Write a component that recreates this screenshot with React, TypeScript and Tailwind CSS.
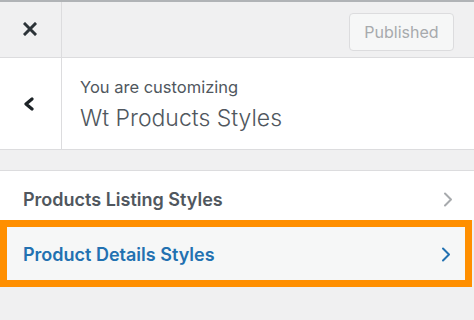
import React from 'react';

const Chevron = ({ className }: { className: string }) => (
  <svg viewBox="0 0 10 15" className={className} fill="none" stroke="currentColor" strokeWidth="2" strokeLinecap="round" strokeLinejoin="round">
    <path d="M2 1.5 L8 7.5 L2 13.5" />
  </svg>
);

export default function App() {
  return (
    <div className="w-[474px] h-[320px] overflow-hidden bg-[#f0f0f1] border-t-2 border-[#b0b3b6] font-['Inter','Liberation_Sans',sans-serif]">
      {/* top bar */}
      <div className="flex h-[56px] border-b border-[#dcdcde]">
        <div className="w-[62px] flex items-center justify-center border-r border-[#dcdcde] pb-[2px] pr-[1px]">
          <svg viewBox="0 0 14 14" className="w-[14px] h-[14px] text-[#2c3338]" fill="none" stroke="currentColor" strokeWidth="3" strokeLinecap="square">
            <path d="M2 2 L12 12 M12 2 L2 12" />
          </svg>
        </div>
        <div className="flex-1 flex justify-end items-start pt-[11px] pr-[20px]">
          <button className="h-[38px] w-[105px] rounded-[4px] border border-[#dcdcde] bg-[#f6f7f7] text-[16px] text-[#a7aaad]">
            Published
          </button>
        </div>
      </div>

      {/* customizing header */}
      <div className="flex h-[92px] bg-white border-b border-[#dcdcde]">
        <div className="w-[62px] flex items-center justify-center border-r border-[#dcdcde] pr-[3px]">
          <svg viewBox="0 0 12 14" className="w-[12px] h-[14px] text-[#1d2327]" fill="none" stroke="currentColor" strokeWidth="3.2" strokeLinecap="round" strokeLinejoin="round">
            <path d="M9 2 L3 7 L9 12" />
          </svg>
        </div>
        <div className="flex-1 flex flex-col pl-[18px] pt-[19px]">
          <span className="text-[16.5px] leading-[20px] text-[#50575e]">You are customizing</span>
          <span className="mt-[5px] text-[23px] leading-[32px] font-light text-[#50575e]">Wt Products Styles</span>
        </div>
      </div>

      <div className="h-[21px] border-b border-[#dcdcde]" />

      <div className="flex items-center justify-between h-[49px] bg-white pl-[23px] pr-[21px] pt-[7px]">
        <span className="text-[18px] font-semibold text-[#50575e]">Products Listing Styles</span>
        <Chevron className="w-[10px] h-[15px] text-[#a7aaad]" />
      </div>

      <div className="flex items-center justify-between w-[472px] h-[67px] border-[7px] border-[#ff8f00] bg-[#f6f7f7] pl-[16px] pr-[14px] pt-[1px]">
        <span className="text-[18px] font-semibold text-[#2271b1]">Product Details Styles</span>
        <Chevron className="w-[10px] h-[15px] text-[#2271b1]" />
      </div>
    </div>
  );
}
